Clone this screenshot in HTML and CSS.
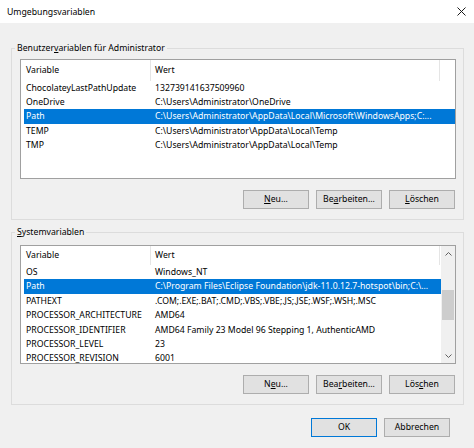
FILE: index.html
```html
<!DOCTYPE html>
<html lang="de">
<head>
    <meta charset="UTF-8">
    <title>Umgebungsvariablen</title>
    <link rel="stylesheet" href="styles.css">
</head>
<body>
<!-- Titelleiste -->
<header class="titlebar">
    <span class="title">Umgebungsvariablen</span>
    <svg class="close" width="9" height="9" viewBox="0 0 9 9">
        <path d="M0.5 0.5 L8.5 8.5 M8.5 0.5 L0.5 8.5" stroke="#1a1a1a" stroke-width="1" fill="none"/>
    </svg>
</header>
<!-- Titelleiste Ende -->

<!-- Benutzervariablen -->
<fieldset class="group group-user">
    <legend>Benutzer<u>v</u>ariablen für Administrator</legend>
    <div class="list">
        <div class="list-main">
            <div class="list-head">
                <span class="head-name">Variable</span>
                <span class="head-value">Wert</span>
            </div>
            <div class="row"><span class="cell-name">ChocolateyLastPathUpdate</span><span class="cell-value">132739141637509960</span></div>
            <div class="row"><span class="cell-name">OneDrive</span><span class="cell-value">C:\Users\Administrator\OneDrive</span></div>
            <div class="row selected"><span class="cell-name">Path</span><span class="cell-value">C:\Users\Administrator\AppData\Local\Microsoft\WindowsApps;C:...</span></div>
            <div class="row"><span class="cell-name">TEMP</span><span class="cell-value">C:\Users\Administrator\AppData\Local\Temp</span></div>
            <div class="row"><span class="cell-name">TMP</span><span class="cell-value">C:\Users\Administrator\AppData\Local\Temp</span></div>
        </div>
    </div>
    <div class="buttons">
        <button type="button" class="btn"><u>N</u>eu...</button>
        <button type="button" class="btn">Be<u>a</u>rbeiten...</button>
        <button type="button" class="btn"><u>L</u>öschen</button>
    </div>
</fieldset>
<!-- Benutzervariablen Ende -->

<!-- Systemvariablen -->
<fieldset class="group group-system">
    <legend><u>S</u>ystemvariablen</legend>
    <div class="list">
        <div class="list-main">
            <div class="list-head">
                <span class="head-name">Variable</span>
                <span class="head-value">Wert</span>
            </div>
            <div class="row"><span class="cell-name">OS</span><span class="cell-value">Windows_NT</span></div>
            <div class="row selected"><span class="cell-name">Path</span><span class="cell-value">C:\Program Files\Eclipse Foundation\jdk-11.0.12.7-hotspot\bin;C:\...</span></div>
            <div class="row"><span class="cell-name">PATHEXT</span><span class="cell-value">.COM;.EXE;.BAT;.CMD;.VBS;.VBE;.JS;.JSE;.WSF;.WSH;.MSC</span></div>
            <div class="row"><span class="cell-name">PROCESSOR_ARCHITECTURE</span><span class="cell-value">AMD64</span></div>
            <div class="row"><span class="cell-name">PROCESSOR_IDENTIFIER</span><span class="cell-value">AMD64 Family 23 Model 96 Stepping 1, AuthenticAMD</span></div>
            <div class="row"><span class="cell-name">PROCESSOR_LEVEL</span><span class="cell-value">23</span></div>
            <div class="row"><span class="cell-name">PROCESSOR_REVISION</span><span class="cell-value">6001</span></div>
        </div>
        <!-- vertikale Bildlaufleiste -->
        <div class="scrollbar">
            <div class="scroll-arrow">
                <svg width="7" height="4" viewBox="0 0 7 4"><polyline points="0.5,3.5 3.5,0.5 6.5,3.5" fill="none" stroke="#606060"/></svg>
            </div>
            <div class="scroll-track">
                <div class="scroll-thumb"></div>
            </div>
            <div class="scroll-arrow">
                <svg width="7" height="4" viewBox="0 0 7 4"><polyline points="0.5,0.5 3.5,3.5 6.5,0.5" fill="none" stroke="#606060"/></svg>
            </div>
        </div>
    </div>
    <div class="buttons">
        <button type="button" class="btn">N<u>e</u>u...</button>
        <button type="button" class="btn">Bea<u>r</u>beiten...</button>
        <button type="button" class="btn">Lös<u>c</u>hen</button>
    </div>
</fieldset>
<!-- Systemvariablen Ende -->

<footer class="footer">
    <button type="button" class="btn btn-default">OK</button>
    <button type="button" class="btn">Abbrechen</button>
</footer>
</body>
</html>
```

FILE: styles.css
```css
html, body {
    margin: 0;
}
body {
    width: 474px;
    height: 448px;
    overflow: hidden;
    background: #f0f0f0;
    color: #000;
    font: 8.7px/1.4 "Noto Sans", "Open Sans", sans-serif;
}
.titlebar {
    height: 23px;
    display: flex;
    align-items: center;
    justify-content: space-between;
    padding: 0 8px 0 7px;
    background: #fff;
}
.titlebar .title {
    line-height: 12px;
}
.titlebar .close {
    display: block;
}

/* Gruppenrahmen */
.group {
    margin: 19px 10px 0 11px;
    padding: 4px 7px 10px 3px;
    border: 1px solid #dcdcdc;
    min-inline-size: 0;
}
.group legend {
    padding: 0 2px;
    line-height: 13px;
}
.group-system {
    margin-top: 6px;
    padding-top: 6px;
}

/* Listenansicht */
.list {
    display: flex;
    height: 120px;
    margin-left: 5px;
    box-sizing: border-box;
    border: 1px solid #a0a0a0;
    background: #fff;
    overflow: hidden;
}
.group-system .list {
    height: 119px;
}
.list-main {
    flex: 1;
    min-width: 0;
}
.list-head {
    display: grid;
    grid-template-columns: 130px 289px;
    height: 20.5px;
    line-height: 20.5px;
}
.group-system .list-head {
    height: 19px;
    line-height: 19px;
}
.list-head span {
    border-right: 1px solid #e5e5e5;
}
.list-head .head-name {
    padding-left: 5px;
}
.list-head .head-value {
    padding-left: 4px;
}
.row {
    display: grid;
    grid-template-columns: 126px 290px;
    height: 14.4px;
    margin-left: 3px;
    line-height: 14.4px;
    white-space: nowrap;
}
.row span {
    overflow: hidden;
}
.row .cell-name {
    padding-left: 2px;
}
.row .cell-value {
    padding-left: 5px;
}
.row.selected {
    background: #0078d7;
    color: #fff;
}

/* Bildlaufleiste */
.scrollbar {
    display: flex;
    flex-direction: column;
    width: 14px;
    background: #f0f0f0;
}
.scroll-arrow {
    display: flex;
    align-items: center;
    justify-content: center;
    height: 15px;
}
.scroll-arrow svg {
    display: block;
}
.scroll-track {
    flex: 1;
}
.scroll-thumb {
    height: 30px;
    margin: 29px 1px 0 1px;
    background: #cdcdcd;
}

/* Schaltflächen */
.buttons {
    display: flex;
    justify-content: flex-end;
    gap: 7px;
    margin: 11px 1px 0 0;
}
.footer {
    display: flex;
    justify-content: flex-end;
    gap: 7px;
    margin: 13px 24px 0 0;
}
.btn {
    width: 66px;
    height: 19px;
    box-sizing: border-box;
    padding: 0;
    border: 1px solid #adadad;
    background: #e1e1e1;
    color: #000;
    font: inherit;
    line-height: 17px;
}
.btn-default {
    border-color: #0078d7;
}
```
